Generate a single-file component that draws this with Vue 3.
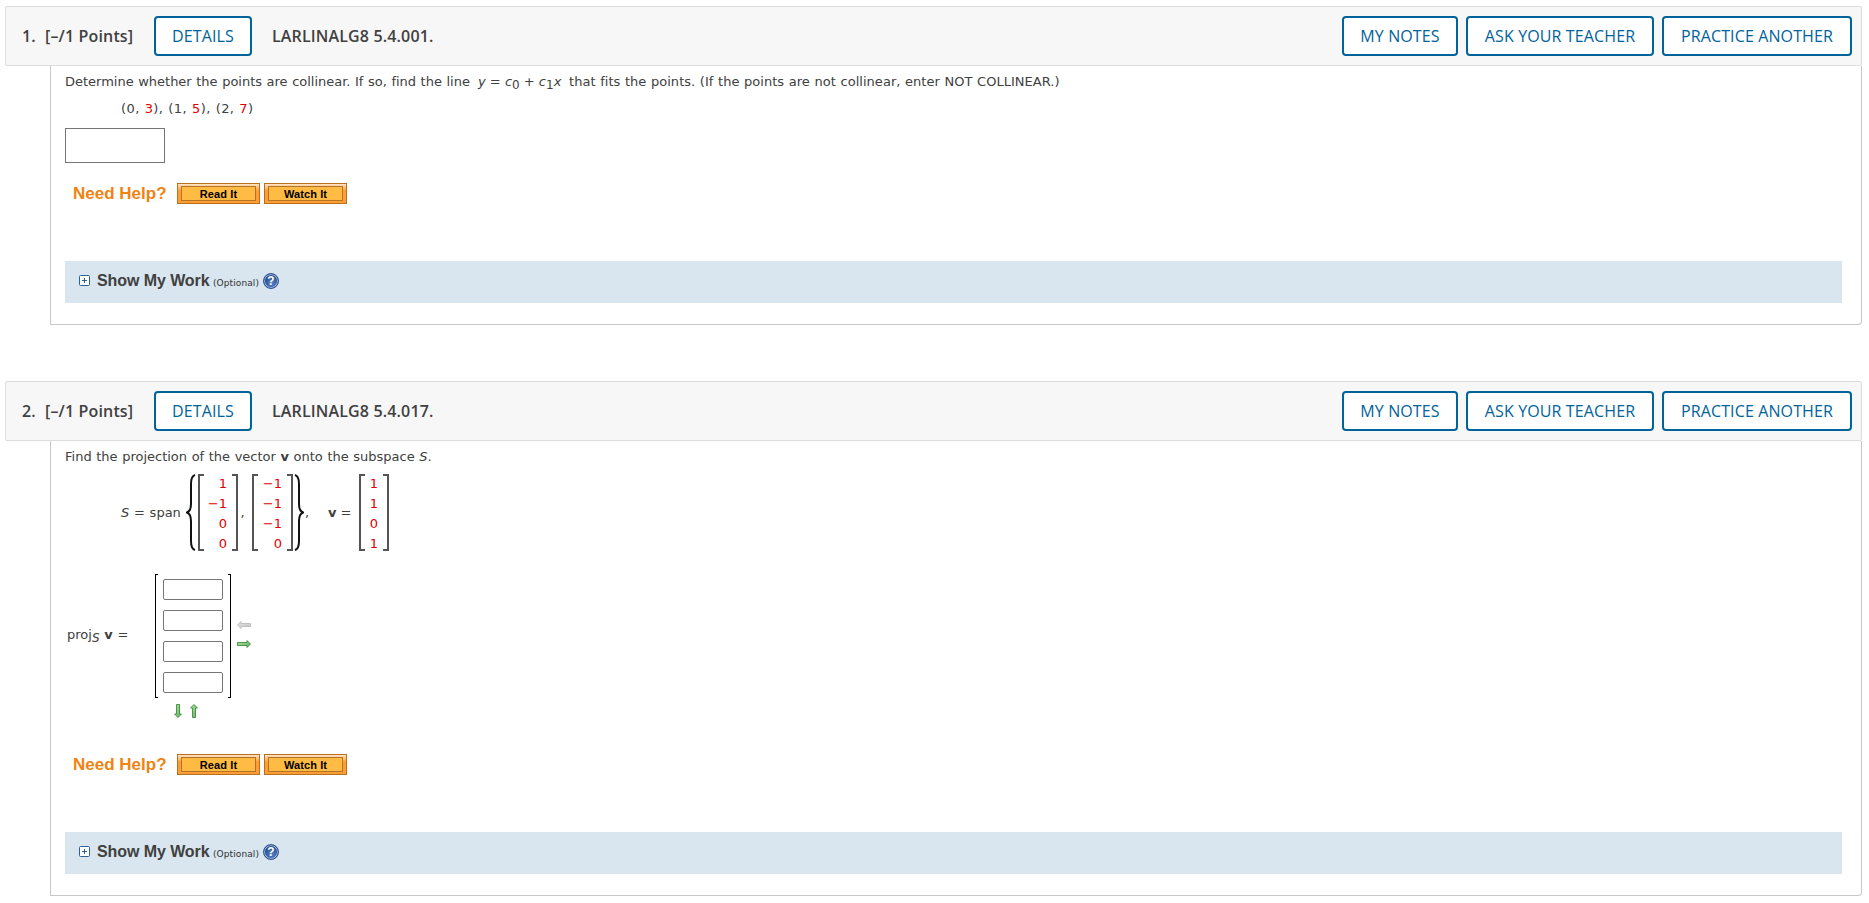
<script setup>
const questions = [
  { id: 1, code: 'LARLINALG8 5.4.001.' },
  { id: 2, code: 'LARLINALG8 5.4.017.' },
]
const actions = [
  { label: 'MY NOTES', cls: 'notes' },
  { label: 'ASK YOUR TEACHER', cls: 'teacher' },
  { label: 'PRACTICE ANOTHER', cls: 'practice' },
]
const first = ['1', '−1', '0', '0']
const second = ['−1', '−1', '−1', '0']
const vector = ['1', '1', '0', '1']
</script>

<template>
  <main class="page">
    <section v-for="q in questions" :key="q.id" class="question">
      <header class="head">
        <span class="num">{{ q.id }}.</span>
        <span class="points">[–/1 Points]</span>
        <button class="btn details">DETAILS</button>
        <span class="code">{{ q.code }}</span>
        <nav class="actions">
          <button v-for="a in actions" :key="a.label" class="btn" :class="a.cls">{{ a.label }}</button>
        </nav>
      </header>
      <div class="body">
        <div v-if="q.id === 1" class="content one">
          <p class="line prompt"><span class="lead">Determine whether the points are collinear. If so, find the line</span><span class="formula"><i>y</i> = <i>c</i><span class="sub">0</span> + <i>c</i><span class="sub">1</span><i>x</i></span><span class="tail">that fits the points. (If the points are not collinear, enter NOT COLLINEAR.)</span></p>
          <p class="line pts">(0, <b>3</b>), (1, <b>5</b>), (2, <b>7</b>)</p>
          <input class="answer" />
        </div>
        <div v-else class="content two">
          <p class="line prompt2">Find the projection of the vector <strong>v</strong> onto the subspace <i>S</i>.</p>
          <div class="equation">
            <span class="eqtext"><i>S</i> = span</span>
            <svg class="brace" width="10" height="77" viewBox="0 0 10 77"><path d="M9 1C5.5 2 5 5 5 10V30C5 35 3.5 37.5 1 38.5C3.5 39.5 5 42 5 47V67C5 72 5.5 75 9 76" /></svg>
            <span class="matrix m1"><span v-for="(n, i) in first" :key="i">{{ n }}</span></span>
            <span class="comma c1">,</span>
            <span class="matrix m2"><span v-for="(n, i) in second" :key="i">{{ n }}</span></span>
            <svg class="brace right" width="10" height="77" viewBox="0 0 10 77"><path d="M1 1C4.500 2 5 5 5 10V30C5 35 6.500 37.500 9 38.500C6.500 39.500 5 42 5 47V67C5 72 4.500 75 1 76" /></svg>
            <span class="comma c2">,</span>
            <span class="veq"><strong>v</strong> =</span>
            <span class="matrix m3"><span v-for="(n, i) in vector" :key="i">{{ n }}</span></span>
          </div>
          <div class="proj">
            <span class="projtext">proj<i class="sub">S</i> <strong>v</strong> =</span>
            <div class="inputs"><input v-for="n in 4" :key="n" /></div>
            <div class="cols">
              <svg width="14" height="8" viewBox="0 0 14 8"><path d="M.5 4L4 .5V2.500H13.500V5.500H4V7.500Z" fill="url(#gray)" stroke="#b5b5b5" stroke-width=".8" /></svg>
              <svg width="14" height="8" viewBox="0 0 14 8"><path d="M13.500 4L10 .5V2.500H.5V5.500H10V7.500Z" fill="url(#green)" stroke="#2f7d33" stroke-width=".8" /></svg>
            </div>
          </div>
          <div class="rows">
            <svg width="8" height="14" viewBox="0 0 8 14"><path d="M4 13.500L.5 10H2.500V.5H5.500V10H7.500Z" fill="url(#green)" stroke="#2f7d33" stroke-width=".8" /></svg>
            <svg width="8" height="14" viewBox="0 0 8 14"><path d="M4 .5L.5 4H2.500V13.500H5.500V4H7.500Z" fill="url(#green)" stroke="#2f7d33" stroke-width=".8" /></svg>
          </div>
        </div>
        <div class="help">
          <span class="need">Need Help?</span>
          <button class="tool"><span>Read It</span></button>
          <button class="tool"><span>Watch It</span></button>
        </div>
        <div class="work">
          <svg class="plus" width="11" height="11" viewBox="0 0 11 11"><rect x=".5" y=".5" width="10" height="10" rx="1" fill="#fff" stroke="#2b6197" /><path d="M3 5.500H8M5.500 3V8" stroke="#2b6197" /></svg>
          <span class="show">Show My Work</span>
          <span class="optional">(Optional)</span>
          <span class="ask">?</span>
        </div>
      </div>
    </section>
    <svg class="defs" width="0" height="0">
      <defs>
        <linearGradient id="green" x1="0" y1="0" x2="1" y2="1"><stop offset="0" stop-color="#b4e89c" /><stop offset="1" stop-color="#5cb058" /></linearGradient>
        <linearGradient id="gray" x1="0" y1="0" x2="1" y2="1"><stop offset="0" stop-color="#e6e6e6" /><stop offset="1" stop-color="#c4c4c4" /></linearGradient>
      </defs>
    </svg>
  </main>
</template>

<style>
body { margin: 0; background: #fff; overflow: hidden; }
</style>

<style scoped>
* { box-sizing: border-box; }
.page { height: 903px; padding: 6px 7px 0 5px; color: #404040; font: 13px/20px Verdana, "DejaVu Sans", sans-serif; overflow: hidden; }
.question + .question { margin-top: 56px; }
p { margin: 0; }
svg { display: block; flex: none; }
.defs { position: absolute; }
.head { height: 60px; border: 1px solid #ddd; border-radius: 2px; background: #f7f7f7; display: flex; align-items: center; font: 600 16px/22px "Open Sans", sans-serif; padding: 0 9px 0 16px; white-space: nowrap; }
.num { width: 23px; }
.points { width: 109px; letter-spacing: .15px; }
.code { letter-spacing: .15px; }
.btn { height: 40px; border: 2px solid #00639a; border-radius: 4px; background: #fff; color: #00639a; font: 400 16px/22px "Open Sans", sans-serif; letter-spacing: .12px; padding: 0; flex: none; white-space: nowrap; }
.details { width: 98px; margin-right: 20px; }
.actions { margin-left: auto; display: flex; gap: 8px; }
.notes { width: 116px; }
.teacher { width: 188px; }
.practice { width: 190px; }
.body { margin-left: 45px; border: 1px solid #c8c8c8; border-top: 0; border-radius: 0 0 4px 0; padding: 0 19px 21px 14px; }
.line { height: 20px; white-space: pre; word-spacing: .45px; }
.one { padding-top: 6px; height: 117px; }
.prompt { display: flex; }
.lead { width: 413px; letter-spacing: -.01px; }
.formula { width: 91px; word-spacing: 0; }
.tail { letter-spacing: .03px; }
.sub { font-size: 12px; line-height: 0; position: relative; top: 3px; }
.pts { margin-top: 7px; padding-left: 56px; letter-spacing: .4px; }
.pts b { font-weight: 400; color: #e00000; }
.answer { display: block; width: 100px; height: 35px; margin-top: 9px; border: 1px solid #767676; border-radius: 0; padding: 0; }
.two { padding-top: 6px; height: 313px; }
.equation { display: flex; height: 77px; margin-top: 7px; padding-left: 56px; align-items: center; }
.eqtext { width: 65px; word-spacing: .6px; }
.brace path { fill: none; stroke: #111; stroke-width: 2; }
.matrix { height: 77px; padding: 2px 6px 0; display: flex; flex-direction: column; justify-content: center; line-height: 20px; color: #e00000; text-align: right; flex: none;
  background: linear-gradient(#555, #555) 0 0 / 6px 2px no-repeat, linear-gradient(#555, #555) 0 100% / 6px 2px no-repeat, linear-gradient(#555, #555) 100% 0 / 6px 2px no-repeat, linear-gradient(#555, #555) 100% 100% / 6px 2px no-repeat, linear-gradient(#555, #555) 0 0 / 2px 100% no-repeat, linear-gradient(#555, #555) 100% 0 / 2px 100% no-repeat; }
.m1 { width: 40px; margin-left: 2px; padding-right: 11px; }
.m2 { width: 41px; padding-right: 11px; }
.m3 { width: 30px; text-align: center; }
.comma { text-align: center; }
.c1 { width: 14px; padding-right: 5px; }
.c2 { width: 6px; }
.right { margin-left: 1px; }
.veq { margin-left: 18px; width: 31px; }
.proj { display: flex; height: 124px; margin-top: 23px; padding-left: 2px; }
.projtext { width: 88px; padding-top: 51px; white-space: nowrap; word-spacing: .6px; }
.inputs { width: 76px; height: 124px; padding: 5px 8px; display: flex; flex-direction: column; gap: 10px;
  background: linear-gradient(#000, #000) 0 0 / 3px 1px no-repeat, linear-gradient(#000, #000) 0 100% / 3px 1px no-repeat, linear-gradient(#000, #000) 100% 0 / 3px 1px no-repeat, linear-gradient(#000, #000) 100% 100% / 3px 1px no-repeat, linear-gradient(#000, #000) 0 0 / 1px 100% no-repeat, linear-gradient(#000, #000) 100% 0 / 1px 100% no-repeat; }
.inputs input { width: 60px; height: 21px; border: 1px solid #767676; border-radius: 2px; padding: 0; }
.cols { padding: 47px 0 0 6px; display: flex; flex-direction: column; gap: 11px; }
.rows { display: flex; gap: 8px; padding: 6px 0 0 109px; }
.help { display: flex; gap: 4px; height: 21px; padding-left: 8px; align-items: center; }
.need { width: 100px; font: bold 17px/21px Arial, "Liberation Sans", sans-serif; color: #ee8411; white-space: nowrap; }
.tool { width: 83px; height: 21px; border: 1px solid #b87020; padding: 2px 3px; background: linear-gradient(#ffe5c8, #ff9d35 35%, #ff9d35); }
.tool span { display: block; height: 15px; border: 1px solid #b57328; background: #ffbb43; color: #000; font: bold 11px/14px Arial, "Liberation Sans", sans-serif; text-align: center; letter-spacing: .1px; }
.work { margin-top: 57px; height: 42px; background: #d9e6ef; padding: 0 14px 3px; display: flex; align-items: center; }
.show { margin-left: 7px; width: 116px; font: bold 16px/20px Arial, "Liberation Sans", sans-serif; letter-spacing: -.08px; white-space: nowrap; }
.optional { width: 50px; font-size: 9px; letter-spacing: .1px; padding-top: 4px; color: #303030; }
.ask { width: 16px; height: 16px; margin-top: 1px; border-radius: 50%; background: radial-gradient(circle at 55% 65%, #5e86cc, #234787 65%); border: 1px solid #2d5290; box-shadow: inset 0 0 0 1px #9db8df; color: #fff; text-align: center; font: bold 12px/14px Arial, "Liberation Sans", sans-serif; }
</style>
